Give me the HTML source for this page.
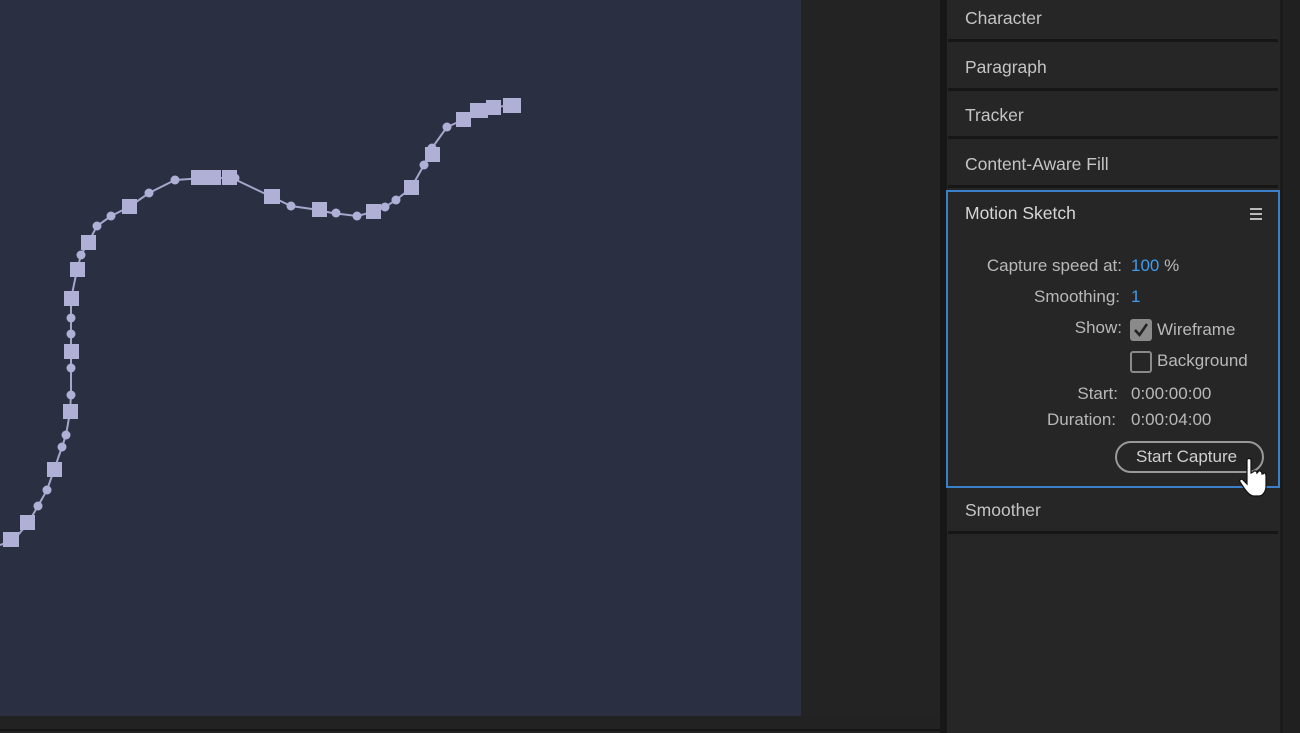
<!DOCTYPE html>
<html><head><style>
*{margin:0;padding:0;box-sizing:border-box}
body{width:1300px;height:733px;overflow:hidden;background:#232323;font-family:"Liberation Sans",sans-serif;position:relative}
.a{position:absolute}
.t{position:absolute;color:#c4c4c4;font-size:17.5px;white-space:nowrap}
.sep{position:absolute;left:948px;width:330px;height:3px;background:#161616}
.l{position:absolute;color:#b8b8b8;font-size:17px;text-align:right;white-space:nowrap}
</style></head><body>
<div class="a" style="left:0;top:0;width:801px;height:716px;background:#2b2f42"></div>
<div class="a" style="left:0;top:716px;width:940px;height:17px;background:#222"></div>
<div class="a" style="left:0;top:729px;width:940px;height:2px;background:#151515"></div>
<div class="a" style="left:940px;top:0;width:7px;height:733px;background:#171717"></div>
<div class="a" style="left:947px;top:0;width:333px;height:733px;background:#262626"></div>
<div class="a" style="left:1280px;top:0;width:20px;height:733px;background:#202020"></div>
<div class="a" style="left:1280px;top:0;width:3px;height:733px;background:#1a1a1a"></div>

<svg class="a" style="left:0;top:0" width="801" height="716">
<path d="M0,545 L14,540 28,523 38,506 47,490 54,470 62,447 66,435 70,412 71,395 71,368 71,352 71,318 71,299 77,270 81,255 88,243 97,226 111,216 129,207 149,193 175,180 205,178 232,178 272,197 291,206 319,210 332,213 357,216 373,212 385,207 396,200 411,188 424,165 432,148 447,127 463,120 480,110 510,105" fill="none" stroke="#a6a6cc" stroke-width="2"/>
<g fill="#b0b0d6">
<rect x="3" y="532" width="16" height="15"/><rect x="20" y="515" width="15" height="15"/><rect x="47" y="462" width="15" height="15"/><rect x="63" y="404" width="15" height="15"/><rect x="64" y="344" width="15" height="15"/><rect x="64" y="291" width="15" height="15"/><rect x="70" y="262" width="15" height="15"/><rect x="81" y="235" width="15" height="15"/><rect x="122" y="199" width="15" height="15"/><rect x="191" y="170" width="30" height="15"/><rect x="222" y="170" width="15" height="15"/><rect x="264" y="189" width="16" height="15"/><rect x="312" y="202" width="15" height="15"/><rect x="366" y="204" width="15" height="15"/><rect x="404" y="180" width="15" height="15"/><rect x="425" y="147" width="15" height="15"/><rect x="456" y="112" width="15" height="15"/><rect x="470" y="103" width="18" height="15"/><rect x="486" y="100" width="15" height="15"/><rect x="503" y="98" width="18" height="15"/>
<circle cx="38" cy="506" r="4.5"/><circle cx="47" cy="490" r="4.5"/><circle cx="62" cy="447" r="4.5"/><circle cx="66" cy="435" r="4.5"/><circle cx="71" cy="395" r="4.5"/><circle cx="71" cy="368" r="4.5"/><circle cx="71" cy="334" r="4.5"/><circle cx="71" cy="318" r="4.5"/><circle cx="81" cy="255" r="4.5"/><circle cx="97" cy="226" r="4.5"/><circle cx="111" cy="216" r="4.5"/><circle cx="149" cy="193" r="4.5"/><circle cx="175" cy="180" r="4.5"/><circle cx="235" cy="178" r="4.5"/><circle cx="291" cy="206" r="4.5"/><circle cx="336" cy="213" r="4.5"/><circle cx="357" cy="216" r="4.5"/><circle cx="385" cy="207" r="4.5"/><circle cx="396" cy="200" r="4.5"/><circle cx="424" cy="165" r="4.5"/><circle cx="432" cy="148" r="4.5"/><circle cx="447" cy="127" r="4.5"/>
</g></svg>

<div class="t" style="left:965px;top:8px">Character</div>
<div class="sep" style="top:39px"></div>
<div class="t" style="left:965px;top:57px">Paragraph</div>
<div class="sep" style="top:88px"></div>
<div class="t" style="left:965px;top:105px">Tracker</div>
<div class="sep" style="top:136px"></div>
<div class="t" style="left:965px;top:154px">Content-Aware Fill</div>
<div class="sep" style="top:185px"></div>

<div class="a" style="left:946px;top:190px;width:334px;height:298px;border:2px solid #3b7fc9"></div>
<div class="t" style="left:965px;top:203px;color:#d6d6d6">Motion Sketch</div>
<div class="a" style="left:1250px;top:208px;width:12px;height:1.5px;background:#bbb;box-shadow:0 5px 0 #bbb,0 10px 0 #bbb"></div>

<div class="l" style="right:178px;top:256px">Capture speed at:</div>
<div class="l" style="left:1131px;top:256px"><span style="color:#3d9cf0">100</span> %</div>
<div class="l" style="right:180px;top:287px">Smoothing:</div>
<div class="l" style="left:1131px;top:287px;color:#3d9cf0">1</div>
<div class="l" style="right:178px;top:318px">Show:</div>
<div class="a" style="left:1130px;top:319px;width:22px;height:22px;background:#8a8a8a;border-radius:3px"></div>
<svg class="a" style="left:1130px;top:319px" width="22" height="22"><path d="M5 11 L9.5 16 L17 5" fill="none" stroke="#222" stroke-width="2.5"/></svg>
<div class="l" style="left:1157px;top:320px">Wireframe</div>
<div class="a" style="left:1130px;top:351px;width:22px;height:22px;border:2px solid #8a8a8a;border-radius:3px"></div>
<div class="l" style="left:1157px;top:351px">Background</div>
<div class="l" style="right:182px;top:384px">Start:</div>
<div class="l" style="left:1131px;top:384px">0:00:00:00</div>
<div class="l" style="right:184px;top:410px">Duration:</div>
<div class="l" style="left:1131px;top:410px">0:00:04:00</div>
<div class="a" style="left:1115px;top:441px;width:149px;height:32px;border:2px solid #999;border-radius:16px"></div>
<div class="l" style="left:1136px;top:447px;color:#d0d0d0">Start Capture</div>
<svg class="a" style="left:1238px;top:458px" width="30" height="42"><path d="M9 2 C9 0 13 0 13 2 L13 15 L15 14 C16 12 19 13 19 15 L20 14 C21 12 24 13 24 16 L25 16 C26 14 28 15 28 18 L28 28 C28 33 25 38 21 38 L16 38 C12 38 9 34 6 30 L2 24 C1 22 3 20 5 22 L9 26 Z" fill="#fff" stroke="#111" stroke-width="1.2"/></svg>

<div class="t" style="left:965px;top:500px">Smoother</div>
<div class="sep" style="top:531px"></div>
</body></html>
